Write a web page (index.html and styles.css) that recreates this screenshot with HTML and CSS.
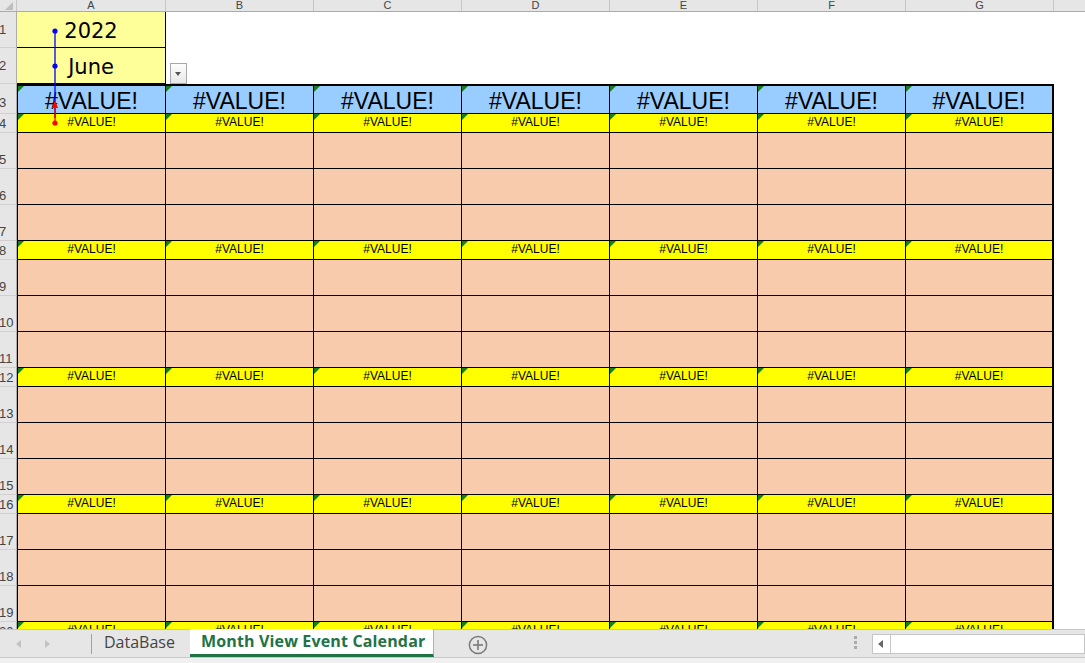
FILE: index.html
```html
<!DOCTYPE html>
<html lang="en">
<head>
    <meta charset="UTF-8">
    <link rel="stylesheet" href="styles.css">
    <title>Month View Event Calendar</title>
</head>
<body>

<div class="sheet">
    <div class="colhead">
        <div class="corner"></div>
        <div class="ch ca">A</div>
        <div class="ch">B</div>
        <div class="ch">C</div>
        <div class="ch">D</div>
        <div class="ch">E</div>
        <div class="ch">F</div>
        <div class="ch">G</div>
        <div class="ch rest"></div>
    </div>

    <div class="row h36">
        <div class="rh mid">1</div>
        <div class="yr">2022</div>
        <div class="rest"></div>
    </div>
    <div class="row h36">
        <div class="rh mid">2</div>
        <div class="yr">June</div>
        <div class="rest"></div>
    </div>

    <div class="row h30">
        <div class="rh low">3</div>
        <div class="cell ca title err">#VALUE!</div>
        <div class="cell title err">#VALUE!</div>
        <div class="cell title err">#VALUE!</div>
        <div class="cell title err">#VALUE!</div>
        <div class="cell title err">#VALUE!</div>
        <div class="cell title err">#VALUE!</div>
        <div class="cell cg title err">#VALUE!</div>
        <div class="rest"></div>
    </div>

    <!-- week 1 -->
    <div class="row h19">
        <div class="rh">4</div>
        <div class="cell ca day err">#VALUE!</div>
        <div class="cell day err">#VALUE!</div>
        <div class="cell day err">#VALUE!</div>
        <div class="cell day err">#VALUE!</div>
        <div class="cell day err">#VALUE!</div>
        <div class="cell day err">#VALUE!</div>
        <div class="cell cg day err">#VALUE!</div>
        <div class="rest"></div>
    </div>
    <div class="row h36">
        <div class="rh">5</div>
        <div class="cell ca slot"></div><div class="cell slot"></div><div class="cell slot"></div><div class="cell slot"></div><div class="cell slot"></div><div class="cell slot"></div><div class="cell cg slot"></div>
        <div class="rest"></div>
    </div>
    <div class="row h36">
        <div class="rh">6</div>
        <div class="cell ca slot"></div><div class="cell slot"></div><div class="cell slot"></div><div class="cell slot"></div><div class="cell slot"></div><div class="cell slot"></div><div class="cell cg slot"></div>
        <div class="rest"></div>
    </div>
    <div class="row h36">
        <div class="rh">7</div>
        <div class="cell ca slot"></div><div class="cell slot"></div><div class="cell slot"></div><div class="cell slot"></div><div class="cell slot"></div><div class="cell slot"></div><div class="cell cg slot"></div>
        <div class="rest"></div>
    </div>

    <!-- week 2 -->
    <div class="row h19">
        <div class="rh">8</div>
        <div class="cell ca day err">#VALUE!</div>
        <div class="cell day err">#VALUE!</div>
        <div class="cell day err">#VALUE!</div>
        <div class="cell day err">#VALUE!</div>
        <div class="cell day err">#VALUE!</div>
        <div class="cell day err">#VALUE!</div>
        <div class="cell cg day err">#VALUE!</div>
        <div class="rest"></div>
    </div>
    <div class="row h36">
        <div class="rh">9</div>
        <div class="cell ca slot"></div><div class="cell slot"></div><div class="cell slot"></div><div class="cell slot"></div><div class="cell slot"></div><div class="cell slot"></div><div class="cell cg slot"></div>
        <div class="rest"></div>
    </div>
    <div class="row h36">
        <div class="rh">10</div>
        <div class="cell ca slot"></div><div class="cell slot"></div><div class="cell slot"></div><div class="cell slot"></div><div class="cell slot"></div><div class="cell slot"></div><div class="cell cg slot"></div>
        <div class="rest"></div>
    </div>
    <div class="row h36">
        <div class="rh">11</div>
        <div class="cell ca slot"></div><div class="cell slot"></div><div class="cell slot"></div><div class="cell slot"></div><div class="cell slot"></div><div class="cell slot"></div><div class="cell cg slot"></div>
        <div class="rest"></div>
    </div>

    <!-- week 3 -->
    <div class="row h19">
        <div class="rh">12</div>
        <div class="cell ca day err">#VALUE!</div>
        <div class="cell day err">#VALUE!</div>
        <div class="cell day err">#VALUE!</div>
        <div class="cell day err">#VALUE!</div>
        <div class="cell day err">#VALUE!</div>
        <div class="cell day err">#VALUE!</div>
        <div class="cell cg day err">#VALUE!</div>
        <div class="rest"></div>
    </div>
    <div class="row h36">
        <div class="rh">13</div>
        <div class="cell ca slot"></div><div class="cell slot"></div><div class="cell slot"></div><div class="cell slot"></div><div class="cell slot"></div><div class="cell slot"></div><div class="cell cg slot"></div>
        <div class="rest"></div>
    </div>
    <div class="row h36">
        <div class="rh">14</div>
        <div class="cell ca slot"></div><div class="cell slot"></div><div class="cell slot"></div><div class="cell slot"></div><div class="cell slot"></div><div class="cell slot"></div><div class="cell cg slot"></div>
        <div class="rest"></div>
    </div>
    <div class="row h36">
        <div class="rh">15</div>
        <div class="cell ca slot"></div><div class="cell slot"></div><div class="cell slot"></div><div class="cell slot"></div><div class="cell slot"></div><div class="cell slot"></div><div class="cell cg slot"></div>
        <div class="rest"></div>
    </div>

    <!-- week 4 -->
    <div class="row h19">
        <div class="rh">16</div>
        <div class="cell ca day err">#VALUE!</div>
        <div class="cell day err">#VALUE!</div>
        <div class="cell day err">#VALUE!</div>
        <div class="cell day err">#VALUE!</div>
        <div class="cell day err">#VALUE!</div>
        <div class="cell day err">#VALUE!</div>
        <div class="cell cg day err">#VALUE!</div>
        <div class="rest"></div>
    </div>
    <div class="row h36">
        <div class="rh">17</div>
        <div class="cell ca slot"></div><div class="cell slot"></div><div class="cell slot"></div><div class="cell slot"></div><div class="cell slot"></div><div class="cell slot"></div><div class="cell cg slot"></div>
        <div class="rest"></div>
    </div>
    <div class="row h36">
        <div class="rh">18</div>
        <div class="cell ca slot"></div><div class="cell slot"></div><div class="cell slot"></div><div class="cell slot"></div><div class="cell slot"></div><div class="cell slot"></div><div class="cell cg slot"></div>
        <div class="rest"></div>
    </div>
    <div class="row h36">
        <div class="rh">19</div>
        <div class="cell ca slot"></div><div class="cell slot"></div><div class="cell slot"></div><div class="cell slot"></div><div class="cell slot"></div><div class="cell slot"></div><div class="cell cg slot"></div>
        <div class="rest"></div>
    </div>

    <!-- week 5 (cut off) -->
    <div class="row h19">
        <div class="rh">20</div>
        <div class="cell ca day err">#VALUE!</div>
        <div class="cell day err">#VALUE!</div>
        <div class="cell day err">#VALUE!</div>
        <div class="cell day err">#VALUE!</div>
        <div class="cell day err">#VALUE!</div>
        <div class="cell day err">#VALUE!</div>
        <div class="cell cg day err">#VALUE!</div>
        <div class="rest"></div>
    </div>

    <!-- data validation button next to A2 -->
    <div class="dropdown"></div>

    <!-- trace precedents arrow -->
    <svg class="trace" width="80" height="130" viewBox="0 0 80 130">
        <line x1="55" y1="31" x2="55" y2="118" stroke="#0000ff" stroke-width="1.3"/>
        <circle cx="55" cy="31" r="2.6" fill="#0000ff"/>
        <circle cx="55" cy="66" r="2.6" fill="#0000ff"/>
        <line x1="55" y1="106" x2="55" y2="123" stroke="#ff0000" stroke-width="1.3"/>
        <polygon points="55,100 52,108 58,108" fill="#ff0000"/>
        <circle cx="55" cy="123" r="2.6" fill="#ff0000"/>
    </svg>
</div>

<div class="tabbar">
    <div class="nav">
        <span class="arrow-left"></span>
        <span class="arrow-right"></span>
    </div>
    <div class="tab">DataBase</div>
    <div class="tab active">Month View Event Calendar</div>
    <div class="addsheet">
        <svg width="20" height="20" viewBox="0 0 20 20">
            <circle cx="10" cy="10" r="8.6" fill="none" stroke="#7a7a7a" stroke-width="1.5"/>
            <line x1="10" y1="5" x2="10" y2="15" stroke="#7a7a7a" stroke-width="1.6"/>
            <line x1="5" y1="10" x2="15" y2="10" stroke="#7a7a7a" stroke-width="1.6"/>
        </svg>
    </div>
    <div class="grip"><span></span><span></span><span></span></div>
    <div class="hscroll">
        <div class="scroll-btn"><span class="arrow-dark"></span></div>
        <div class="scroll-track"></div>
    </div>
</div>
<div class="statusbar"></div>

</body>
</html>
```

FILE: styles.css
```css
body {
    margin: 0;
    width: 1085px;
    height: 663px;
    overflow: hidden;
    background-color: #fff;
    font-family: "Liberation Sans", Arial, sans-serif;
}

.sheet {
    position: relative;
    height: 629px;
    overflow: hidden;
}

/* column letters */
.colhead {
    display: flex;
    height: 12px;
    background-color: #e6e6e6;
    border-bottom: 1px solid #ababab;
    box-sizing: border-box;
}

.corner {
    position: relative;
    width: 17px;
    flex: none;
    border-right: 1px solid #c6c6c6;
    box-sizing: border-box;
}

.corner::after {
    content: "";
    position: absolute;
    right: 3px;
    bottom: 1px;
    border-bottom: 8px solid #bdbdbd;
    border-left: 8px solid transparent;
}

.ch {
    width: 148px;
    flex: none;
    border-right: 1px solid #c6c6c6;
    box-sizing: border-box;
    text-align: center;
    font-size: 11px;
    line-height: 11px;
    color: #444;
}

.ch.ca {
    width: 149px;
}

.ch.rest {
    flex: 1;
    border-right: none;
}

/* rows */
.row {
    display: flex;
}

.h36 { height: 36px; }
.h30 { height: 30px; }
.h19 { height: 19px; }

.rest {
    flex: 1;
}

.rh {
    width: 17px;
    flex: none;
    display: flex;
    align-items: flex-end;
    padding-bottom: 2px;
    background-color: #e6e6e6;
    border-right: 1px solid #ababab;
    border-bottom: 1px solid #d0d0d0;
    box-sizing: border-box;
    overflow: hidden;
    font-size: 13px;
    line-height: 13px;
    color: #444;
    text-indent: -1px;
    white-space: nowrap;
}

.rh.mid {
    align-items: center;
    padding-bottom: 0;
}

.rh.low {
    padding-bottom: 4px;
}

.yr {
    width: 149px;
    flex: none;
    display: flex;
    align-items: center;
    justify-content: center;
    padding-top: 3px;
    background-color: #ffff99;
    border-right: 1px solid #000;
    border-bottom: 1px solid #000;
    box-sizing: border-box;
    font-family: "DejaVu Sans", sans-serif;
    font-size: 21px;
    color: #000;
}

/* calendar cells */
.cell {
    position: relative;
    width: 148px;
    flex: none;
    border-right: 1px solid #000;
    border-bottom: 1px solid #000;
    box-sizing: border-box;
    text-align: center;
    overflow: hidden;
    color: #000;
}

.cell.ca {
    width: 149px;
    border-left: 1px solid #000;
}

.cell.cg {
    border-right: 2px solid #000;
}

.title {
    background-color: #99ccff;
    border-top: 2px solid #000;
    padding-top: 2px;
    font-size: 23px;
    line-height: 26px;
}

.day {
    background-color: #ffff00;
    padding-top: 1px;
    font-size: 12px;
    line-height: 14px;
}

.slot {
    background-color: #f8cbad;
}

/* green error marker in the corner */
.err::before {
    content: "";
    position: absolute;
    left: 0;
    top: 0;
    border-top: 6px solid #13801c;
    border-right: 6px solid transparent;
}

.dropdown {
    position: absolute;
    left: 170px;
    top: 63px;
    width: 17px;
    height: 21px;
    border: 1px solid #a9a9a9;
    background: linear-gradient(#fdfdfd, #e8e8e8);
    box-sizing: border-box;
}

.dropdown::after {
    content: "";
    position: absolute;
    left: 4px;
    top: 8px;
    border-top: 4px solid #555;
    border-left: 3.5px solid transparent;
    border-right: 3.5px solid transparent;
}

.trace {
    position: absolute;
    left: 0;
    top: 0;
    pointer-events: none;
}

/* sheet tabs */
.tabbar {
    display: flex;
    height: 28px;
    background-color: #e6e6e6;
    border-top: 1px solid #c6c6c6;
    box-sizing: border-box;
    font-family: "Open Sans", "Liberation Sans", sans-serif;
}

.nav {
    position: relative;
    width: 91px;
    flex: none;
    border-right: 1px solid #a0a0a0;
    margin: 4px 0 3px;
}

.arrow-left,
.arrow-right {
    position: absolute;
    top: 6px;
    border-top: 4px solid transparent;
    border-bottom: 4px solid transparent;
}

.arrow-left {
    left: 16px;
    border-right: 5px solid #c2c2c2;
}

.arrow-right {
    left: 45px;
    border-left: 5px solid #c2c2c2;
}

.tab {
    width: 98px;
    flex: none;
    box-sizing: border-box;
    padding-left: 12px;
    font-size: 16px;
    line-height: 25px;
    color: #444;
}

.tab.active {
    width: 244px;
    margin-top: -1px;
    padding-left: 11px;
    background-color: #fff;
    border-bottom: 3px solid #217346;
    border-right: 1px solid #b0b0b0;
    font-size: 16px;
    font-weight: bold;
    line-height: 25px;
    color: #217346;
    letter-spacing: 0.15px;
    white-space: nowrap;
}

.addsheet {
    width: 420px;
    flex: none;
    padding: 5px 0 0 34px;
    box-sizing: border-box;
}

.grip {
    display: flex;
    flex-direction: column;
    gap: 2px;
    padding-top: 6px;
    width: 18px;
    flex: none;
}

.grip span {
    width: 3px;
    height: 3px;
    background-color: #aaa;
}

.hscroll {
    display: flex;
    flex: 1;
    margin: 4px 0 3px;
}

.scroll-btn {
    position: relative;
    width: 19px;
    flex: none;
    background-color: #fff;
    border: 1px solid #c6c6c6;
    box-sizing: border-box;
}

.arrow-dark {
    position: absolute;
    left: 5px;
    top: 5px;
    border-top: 4px solid transparent;
    border-bottom: 4px solid transparent;
    border-right: 5px solid #666;
}

.scroll-track {
    flex: 1;
    background-color: #fff;
    border: 1px solid #c6c6c6;
    border-left: none;
}

.statusbar {
    height: 6px;
    background-color: #f0f0f0;
    border-top: 1px solid #c8c8c8;
}
```
